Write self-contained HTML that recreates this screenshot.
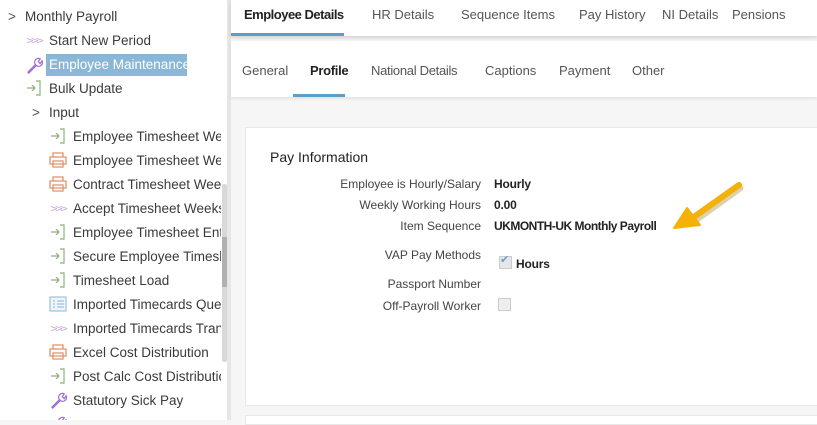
<!DOCTYPE html>
<html><head><meta charset="utf-8"><style>
*{margin:0;padding:0;box-sizing:border-box}
body{width:817px;height:420px;overflow:hidden;background:#f6f6f6;font-family:"Liberation Sans",sans-serif;color:#333;position:relative}
.side{position:absolute;left:0;top:0;width:228px;height:420px;background:#fff;overflow:hidden}
.div{position:absolute;left:227px;top:0;width:4px;height:420px;background:#e6e6e6}
.row{position:absolute;height:22px;line-height:22px;font-size:13.5px;white-space:nowrap;color:#3a3a3a}
.chev{position:absolute;height:22px;line-height:22px;font-size:13px;color:#c9a3e6;letter-spacing:-2.5px;transform:scaleY(.8)}
.ic{position:absolute;width:16px;height:16px}
.track{position:absolute;left:222px;top:184px;width:5px;height:178px;background:#d8d8d8;border-radius:2px}
.thumb{position:absolute;left:222px;top:237px;width:5px;height:50px;background:#b0b0b0}
.tabs1{position:absolute;left:231px;top:0;width:586px;height:36px;background:#fff;box-shadow:0 2px 4px rgba(0,0,0,.15)}
.tabs2{position:absolute;left:231px;top:41px;width:586px;height:56px;background:#fff;box-shadow:0 2px 3px rgba(0,0,0,.08)}
.t{position:absolute;font-size:13px;color:#555;white-space:nowrap}
.card{position:absolute;left:245px;top:127px;width:580px;height:279px;background:#fff;border:1px solid #e8e8e8}
.card2{position:absolute;left:245px;top:415px;width:580px;height:10px;background:#fff;border:1px solid #e8e8e8}
.lb{position:absolute;right:336px;font-size:12px;color:#444;white-space:nowrap;text-align:right}
.v{position:absolute;left:494px;font-size:12px;color:#222;font-weight:bold;white-space:nowrap;letter-spacing:-0.2px}
</style></head><body>
<div class="side">
<div class="row" style="left:8px;top:6px;color:#555">&gt;</div>
<div class="row" style="left:25px;top:6px">Monthly Payroll</div>

<div class="chev" style="left:26px;top:30px">&gt;&gt;&gt;</div>
<div class="row" style="left:49px;top:30px">Start New Period</div>

<svg class="ic" style="left:25px;top:56px;width:19px;height:19px" viewBox="0 0 20 20"><path d="M3 17 L11 9 A4 4 0 0 1 16 3 L14 6 L16 8 L18 5 A4 4 0 0 1 12 10 L4 18 Z" fill="none" stroke="#9b6fd6" stroke-width="1.3"/></svg>
<div class="row" style="left:46px;top:54px;background:#8ab7d6;color:#fff;padding:0 3px;width:141px">Employee Maintenance</div>

<svg class="ic" style="left:26px;top:80px" viewBox="0 0 16 16"><path d="M1 8h8M6 5l3 3-3 3M10 1h4v14h-4" fill="none" stroke="#8db07a" stroke-width="1.2"/></svg>
<div class="row" style="left:49px;top:78px">Bulk Update</div>

<div class="row" style="left:32px;top:102px;color:#555">&gt;</div>
<div class="row" style="left:49px;top:102px">Input</div>

<svg class="ic" style="left:50px;top:128px" viewBox="0 0 16 16"><path d="M1 8h8M6 5l3 3-3 3M10 1h4v14h-4" fill="none" stroke="#8db07a" stroke-width="1.2"/></svg>
<div class="row" style="left:73px;top:126px">Employee Timesheet Weeks</div>
<svg class="ic" style="left:49px;top:152px;width:18px" viewBox="0 0 18 16"><path d="M4 1h10v4H4zM1 5h16v7H1zM4 9h10v6H4z" fill="#fff" stroke="#e0936a" stroke-width="1.3"/></svg>
<div class="row" style="left:73px;top:150px">Employee Timesheet Weeks</div>
<svg class="ic" style="left:49px;top:176px;width:18px" viewBox="0 0 18 16"><path d="M4 1h10v4H4zM1 5h16v7H1zM4 9h10v6H4z" fill="#fff" stroke="#e0936a" stroke-width="1.3"/></svg>
<div class="row" style="left:73px;top:174px">Contract Timesheet Weeks</div>
<div class="chev" style="left:50px;top:198px">&gt;&gt;&gt;</div>
<div class="row" style="left:73px;top:198px">Accept Timesheet Weeks</div>
<svg class="ic" style="left:50px;top:224px" viewBox="0 0 16 16"><path d="M1 8h8M6 5l3 3-3 3M10 1h4v14h-4" fill="none" stroke="#8db07a" stroke-width="1.2"/></svg>
<div class="row" style="left:73px;top:222px">Employee Timesheet Entry</div>
<svg class="ic" style="left:50px;top:248px" viewBox="0 0 16 16"><path d="M1 8h8M6 5l3 3-3 3M10 1h4v14h-4" fill="none" stroke="#8db07a" stroke-width="1.2"/></svg>
<div class="row" style="left:73px;top:246px">Secure Employee Timesheet</div>
<svg class="ic" style="left:50px;top:272px" viewBox="0 0 16 16"><path d="M1 8h8M6 5l3 3-3 3M10 1h4v14h-4" fill="none" stroke="#8db07a" stroke-width="1.2"/></svg>
<div class="row" style="left:73px;top:270px">Timesheet Load</div>
<svg class="ic" style="left:49px;top:296px;width:18px" viewBox="0 0 18 16"><rect x="1" y="1" width="16" height="14" fill="#eef5fb" stroke="#8ab7d6"/><path d="M4 5h2M8 5h7M4 8h2M8 8h7M4 11h2M8 11h7" stroke="#8ab7d6"/></svg>
<div class="row" style="left:73px;top:294px">Imported Timecards Queue</div>
<div class="chev" style="left:50px;top:318px">&gt;&gt;&gt;</div>
<div class="row" style="left:73px;top:318px">Imported Timecards Transfer</div>
<svg class="ic" style="left:49px;top:344px;width:18px" viewBox="0 0 18 16"><path d="M4 1h10v4H4zM1 5h16v7H1zM4 9h10v6H4z" fill="#fff" stroke="#e0936a" stroke-width="1.3"/></svg>
<div class="row" style="left:73px;top:342px">Excel Cost Distribution</div>
<svg class="ic" style="left:50px;top:368px" viewBox="0 0 16 16"><path d="M1 8h8M6 5l3 3-3 3M10 1h4v14h-4" fill="none" stroke="#8db07a" stroke-width="1.2"/></svg>
<div class="row" style="left:73px;top:366px">Post Calc Cost Distribution</div>
<svg class="ic" style="left:49px;top:391px;width:19px;height:19px" viewBox="0 0 20 20"><path d="M3 17 L11 9 A4 4 0 0 1 16 3 L14 6 L16 8 L18 5 A4 4 0 0 1 12 10 L4 18 Z" fill="none" stroke="#9b6fd6" stroke-width="1.3"/></svg>
<div class="row" style="left:73px;top:390px">Statutory Sick Pay</div>
<svg class="ic" style="left:49px;top:415px;width:19px;height:19px" viewBox="0 0 20 20"><path d="M3 17 L11 9 A4 4 0 0 1 16 3 L14 6 L16 8 L18 5 A4 4 0 0 1 12 10 L4 18 Z" fill="none" stroke="#9b6fd6" stroke-width="1.3"/></svg>
</div>
<div style="position:absolute;left:221px;top:0;width:7px;height:420px;background:#fff"></div>
<div class="track"></div><div class="thumb"></div>
<div class="div"></div>

<div class="tabs1">
<div class="t" style="left:13px;top:7px;color:#222;font-weight:bold;letter-spacing:-0.5px">Employee Details</div>
<div style="position:absolute;left:0;top:33px;width:113px;height:3px;background:#5b9fc8"></div>
<div class="t" style="left:141px;top:7px">HR Details</div>
<div class="t" style="left:230px;top:7px">Sequence Items</div>
<div class="t" style="left:348px;top:7px">Pay History</div>
<div class="t" style="left:431px;top:7px">NI Details</div>
<div class="t" style="left:501px;top:7px">Pensions</div>
</div>
<div class="tabs2">
<div class="t" style="left:11px;top:22px">General</div>
<div class="t" style="left:79px;top:22px;color:#222;font-weight:bold;letter-spacing:-0.3px">Profile</div>
<div style="position:absolute;left:62px;top:53px;width:52px;height:3px;background:#5b9fc8"></div>
<div class="t" style="left:140px;top:22px;letter-spacing:-0.3px">National Details</div>
<div class="t" style="left:254px;top:22px">Captions</div>
<div class="t" style="left:328px;top:22px">Payment</div>
<div class="t" style="left:401px;top:22px">Other</div>
</div>

<div class="card"></div>
<div class="card2"></div>
<div style="position:absolute;left:270px;top:149px;font-size:14px;color:#222">Pay Information</div>
<div class="lb" style="top:177px">Employee is Hourly/Salary</div>
<div class="lb" style="top:198px">Weekly Working Hours</div>
<div class="lb" style="top:219px">Item Sequence</div>
<div class="lb" style="top:248px">VAP Pay Methods</div>
<div class="lb" style="top:277px">Passport Number</div>
<div class="lb" style="top:299px">Off-Payroll Worker</div>
<div class="v" style="top:177px">Hourly</div>
<div class="v" style="top:198px">0.00</div>
<div class="v" style="top:219px;letter-spacing:-0.5px">UKMONTH-UK Monthly Payroll</div>
<div style="position:absolute;left:499px;top:256px;width:13px;height:13px;background:#e6e6e6;border:1px solid #ccc"></div>
<div style="position:absolute;left:500px;top:253px;font-size:11px;color:#6aa0d0">✔</div>
<div class="v" style="left:516px;top:257px">Hours</div>
<div style="position:absolute;left:498px;top:298px;width:13px;height:13px;background:#eee;border:1px solid #ccc"></div>

<svg style="position:absolute;left:665px;top:175px" width="90" height="65" viewBox="0 0 90 65">
<path d="M74 11 L28 44" stroke="#9a7a20" stroke-opacity=".35" stroke-width="7" stroke-linecap="round" transform="translate(1,2)"/>
<path d="M74 10 L26 44" stroke="#f3b10a" stroke-width="6" stroke-linecap="round"/>
<path d="M9 53 L22 33 L35 50 Z" fill="#f3b10a" stroke="#f3b10a" stroke-width="2" stroke-linejoin="round"/>
</svg>
</body></html>
